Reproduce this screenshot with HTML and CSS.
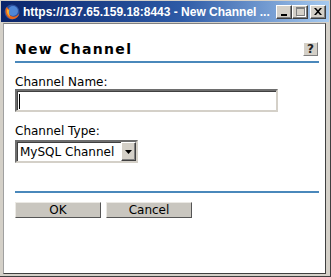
FILE: index.html
```html
<!DOCTYPE html>
<html lang="en">
<head>
    <meta charset="UTF-8">
    <title>New Channel</title>
    <link rel="stylesheet" href="styles.css">
</head>
<body>
    <div class="window">
        <div class="titlebar">
            <svg class="app-icon" width="16" height="16" viewBox="0 0 16 16">
                <circle cx="8" cy="8" r="7.5" fill="#2b4f9e"/>
                <circle cx="9" cy="7" r="5" fill="#4f86d6"/>
                <path d="M2.2 3.5 C0.5 7 1.5 12.5 6 14.8 C10 16.3 14.5 13.5 15.3 9.5 C13.5 12.5 9.5 13.5 7 12 C4.5 10.5 4 7.5 5.5 5.5 C4.5 5.2 3.6 4.5 3.4 3.2 C3 3.5 2.6 3.6 2.2 3.5 Z" fill="#e8661c"/>
                <path d="M3 5 C2.5 8 3.5 11.5 6.5 13 C5 11 4.5 8.5 5.2 6.3 Z" fill="#f7b232"/>
            </svg>
            <span class="title-text">https://137.65.159.18:8443 - New Channel ...</span>
            <div class="caption-buttons">
                <span class="cap-btn"><span class="glyph-min"></span></span>
                <span class="cap-btn disabled"><span class="glyph-max"></span></span>
                <span class="cap-btn close">
                    <svg width="8" height="7" viewBox="0 0 8 7"><path d="M0 0h2l2 2.3L6 0h2L5 3.5 8 7H6L4 4.7 2 7H0l3-3.5z" fill="#000"/></svg>
                </span>
            </div>
        </div>
        <div class="client">
            <div class="heading-row">
                <h1>New Channel</h1>
                <span class="help-btn">?</span>
            </div>

            <label class="field-label">Channel Name:</label>
            <div class="textbox"><span class="caret"></span></div>

            <label class="field-label type-label">Channel Type:</label>
            <div class="select">
                <span class="select-value">MySQL Channel</span>
                <span class="select-arrow">
                    <svg width="7" height="4" viewBox="0 0 7 4"><path d="M0 0h7L3.5 4z" fill="#000"/></svg>
                </span>
            </div>

            <div class="actions">
                <button type="button" class="btn">OK</button>
                <button type="button" class="btn">Cancel</button>
            </div>
        </div>
    </div>
</body>
</html>
```

FILE: styles.css
```css
body {
    margin: 0;
    font-family: 'DejaVu Sans', sans-serif;
    font-size: 12px;
    color: #000;
}
.window {
    width: 331px;
    height: 277px;
    box-sizing: border-box;
    padding: 1px 1px 0 1px;
    background-color: #d4d0c8;
    border-right: 1px solid #404040;
    border-bottom: 1px solid #404040;
    display: flex;
    flex-direction: column;
}
.titlebar {
    height: 21px;
    flex-shrink: 0;
    display: flex;
    align-items: center;
    padding: 0 3px 0 3px;
    background: linear-gradient(to right, #0a246a 0%, #2d5aa6 55%, #a6caf0 100%);
}
.app-icon {
    flex-shrink: 0;
    margin-right: 3px;
}
.title-text {
    flex: 1;
    white-space: nowrap;
    overflow: hidden;
    color: #fff;
    font-family: 'Liberation Sans', sans-serif;
    font-weight: bold;
    font-size: 12px;
}
.caption-buttons {
    display: flex;
    align-items: center;
    margin-left: 2px;
}
.cap-btn {
    width: 16px;
    height: 14px;
    box-sizing: border-box;
    background-color: #d4d0c8;
    border: 1px solid;
    border-color: #fff #404040 #404040 #fff;
    box-shadow: inset -1px -1px #808080;
    display: flex;
    align-items: center;
    justify-content: center;
}
.cap-btn.close {
    margin-left: 2px;
}
.glyph-min {
    width: 6px;
    height: 2px;
    background-color: #000;
    margin-top: 6px;
}
.glyph-max {
    width: 7px;
    height: 6px;
    border: 1px solid #808080;
    border-top-width: 2px;
    box-shadow: 1px 1px #fff;
}
.client {
    flex: 1;
    margin: 1px 3px 2px 2px;
    background-color: #fff;
    border: 1px solid;
    border-color: #808080 #404040 #404040 #a0a0a0;
    padding: 17px 6px 0 11px;
}
.heading-row {
    display: flex;
    justify-content: space-between;
    align-items: flex-start;
    border-bottom: 2px solid #4a88bb;
    padding-bottom: 3px;
}
h1 {
    margin: 0;
    font-size: 14px;
    line-height: 17px;
    font-weight: bold;
    letter-spacing: 1.3px;
}
.help-btn {
    width: 15px;
    height: 14px;
    box-sizing: border-box;
    margin: 1px 1px 0 0;
    background-color: #d4d0c8;
    border: 1px solid;
    border-color: #fff #808080 #808080 #fff;
    font-weight: bold;
    font-size: 12px;
    line-height: 12px;
    text-align: center;
    color: #222;
}
.field-label {
    display: block;
    margin-top: 12px;
    line-height: 14px;
}
.textbox {
    width: 263px;
    height: 23px;
    box-sizing: border-box;
    border: 2px solid;
    border-color: #6e6e6e #d4d0c8 #d4d0c8 #6e6e6e;
    box-shadow: inset 1px 1px #404040;
    padding: 3px 0 0 2px;
}
.caret {
    display: block;
    width: 1px;
    height: 15px;
    background-color: #000;
}
.type-label {
    margin-top: 12px;
}
.select {
    width: 123px;
    height: 23px;
    margin-top: 2px;
    box-sizing: border-box;
    border: 2px solid;
    border-color: #6e6e6e #d4d0c8 #d4d0c8 #6e6e6e;
    box-shadow: inset 1px 1px #404040;
    display: flex;
    align-items: center;
    justify-content: space-between;
    padding: 0 0 0 3px;
}
.select-value {
    line-height: 14px;
}
.select-arrow {
    width: 15px;
    height: 19px;
    box-sizing: border-box;
    background-color: #d4d0c8;
    border: 1px solid;
    border-color: #fff #404040 #404040 #fff;
    box-shadow: inset -1px -1px #808080;
    display: flex;
    align-items: center;
    justify-content: center;
}
.actions {
    margin-top: 28px;
    border-top: 2px solid #4a88bb;
    padding-top: 9px;
    display: flex;
    gap: 5px;
}
.btn {
    width: 86px;
    height: 16px;
    padding: 0;
    margin: 0;
    font-family: 'DejaVu Sans', sans-serif;
    font-size: 12px;
    line-height: 13px;
    color: #000;
    background-color: #c9c6bf;
    border: 1px solid;
    border-color: #ebe9e4 #555 #555 #ebe9e4;
    border-radius: 0;
}
```
